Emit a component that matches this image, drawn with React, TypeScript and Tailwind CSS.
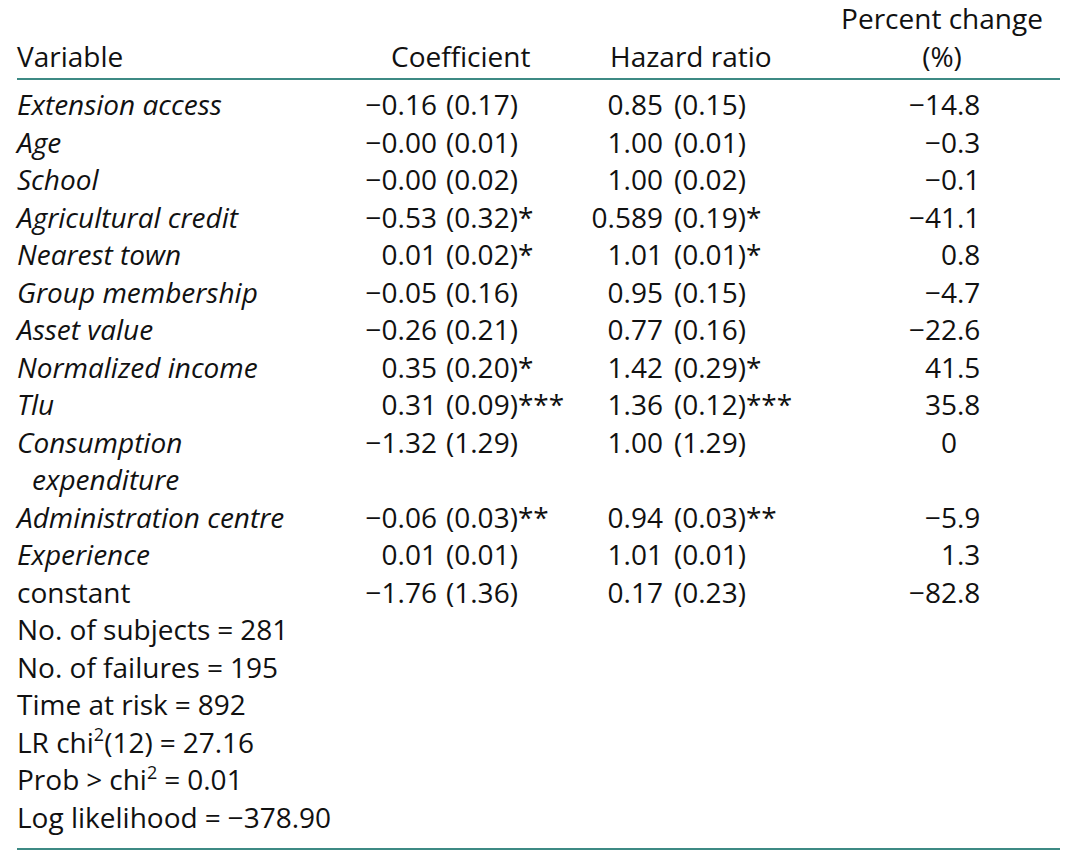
type Row = {
  label: string
  italic?: boolean
  indent?: boolean
  coef?: [string, string]
  hazard?: [string, string]
  pct?: [string, string]
}

const rows: Row[] = [
  { label: 'Extension access', italic: true, coef: ['−0.16', '(0.17)'], hazard: ['0.85', '(0.15)'], pct: ['−14', '.8'] },
  { label: 'Age', italic: true, coef: ['−0.00', '(0.01)'], hazard: ['1.00', '(0.01)'], pct: ['−0', '.3'] },
  { label: 'School', italic: true, coef: ['−0.00', '(0.02)'], hazard: ['1.00', '(0.02)'], pct: ['−0', '.1'] },
  { label: 'Agricultural credit', italic: true, coef: ['−0.53', '(0.32)*'], hazard: ['0.589', '(0.19)*'], pct: ['−41', '.1'] },
  { label: 'Nearest town', italic: true, coef: ['0.01', '(0.02)*'], hazard: ['1.01', '(0.01)*'], pct: ['0', '.8'] },
  { label: 'Group membership', italic: true, coef: ['−0.05', '(0.16)'], hazard: ['0.95', '(0.15)'], pct: ['−4', '.7'] },
  { label: 'Asset value', italic: true, coef: ['−0.26', '(0.21)'], hazard: ['0.77', '(0.16)'], pct: ['−22', '.6'] },
  { label: 'Normalized income', italic: true, coef: ['0.35', '(0.20)*'], hazard: ['1.42', '(0.29)*'], pct: ['41', '.5'] },
  { label: 'Tlu', italic: true, coef: ['0.31', '(0.09)***'], hazard: ['1.36', '(0.12)***'], pct: ['35', '.8'] },
  { label: 'Consumption', italic: true, coef: ['−1.32', '(1.29)'], hazard: ['1.00', '(1.29)'], pct: ['0', ''] },
  { label: 'expenditure', italic: true, indent: true },
  { label: 'Administration centre', italic: true, coef: ['−0.06', '(0.03)**'], hazard: ['0.94', '(0.03)**'], pct: ['−5', '.9'] },
  { label: 'Experience', italic: true, coef: ['0.01', '(0.01)'], hazard: ['1.01', '(0.01)'], pct: ['1', '.3'] },
  { label: 'constant', coef: ['−1.76', '(1.36)'], hazard: ['0.17', '(0.23)'], pct: ['−82', '.8'] },
]

const grid = 'grid grid-cols-[323px_97px_153px_73px_227px_67px_1fr]'
const eq = '\u2005=\u2005'

function DataRow({ row }: { row: Row }): React.JSX.Element {
  return (
    <div className={`${grid} h-[37.5px] items-center`}>
      <div className={`${row.italic ? 'italic' : ''} ${row.indent ? 'pl-[15px]' : ''} whitespace-nowrap`}>{row.label}</div>
      <div className="text-right">{row.coef?.[0]}</div>
      <div className="pl-[9px] whitespace-nowrap">{row.coef?.[1]}</div>
      <div className="text-right">{row.hazard?.[0]}</div>
      <div className="pl-[11px] whitespace-nowrap">{row.hazard?.[1]}</div>
      <div className="text-right">{row.pct?.[0]}</div>
      <div>{row.pct?.[1]}</div>
    </div>
  )
}

function Footer({ children }: { children: React.ReactNode }): React.JSX.Element {
  return <div className="flex h-[37.5px] items-center whitespace-nowrap">{children}</div>
}

function Sup({ children }: { children: React.ReactNode }): React.JSX.Element {
  return <span className="relative -top-[8px] text-[18px] leading-none">{children}</span>
}

export default function App(): React.JSX.Element {
  return (
    <div className="min-h-[852px] bg-white text-[#111]" style={{ fontFamily: '"Open Sans", "Noto Sans", sans-serif' }}>
      <div className="ml-[17px] w-[1043px] text-[28px] leading-[37.5px]">
        <div className={`${grid} items-end`}>
          <div>Variable</div>
          <div className="col-span-2 pl-[51px]">Coefficient</div>
          <div className="col-span-2 pl-[20px]">Hazard ratio</div>
          <div className="col-span-2 -ml-[55px] w-[214px] text-center">
            Percent change
            <br />
            (%)
          </div>
        </div>
        <div className="mt-[3px] h-[2px] bg-[#3d8a84]" />
        <div className="mt-[6px]">
          {rows.map((row) => (
            <DataRow key={row.label} row={row} />
          ))}
          <Footer>No. of subjects{eq}281</Footer>
          <Footer>No. of failures{eq}195</Footer>
          <Footer>Time at risk{eq}892</Footer>
          <Footer>
            LR chi<Sup>2</Sup>(12){eq}27.16
          </Footer>
          <Footer>
            Prob{'\u2005'}&gt;{'\u2005'}chi<Sup>2</Sup>
            {eq}0.01
          </Footer>
          <Footer>Log likelihood{eq}−378.90</Footer>
        </div>
        <div className="mt-[12px] h-[2px] bg-[#3d8a84]" />
      </div>
    </div>
  )
}
